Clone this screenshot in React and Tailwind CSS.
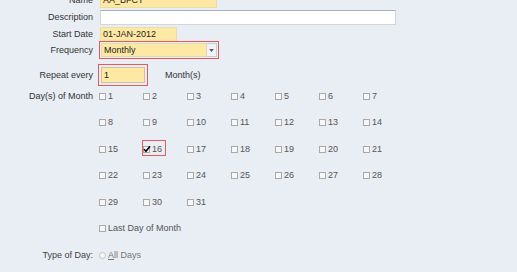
import React from "react";

const FONT = "font-['Liberation_Sans',Arial,sans-serif]";

function Label({ children, className = "" }) {
  return (
    <div className={`w-[93px] shrink-0 text-right text-[9px] leading-none text-[#333] pr-0 ${className}`}>
      {children}
    </div>
  );
}

function Box({ checked }) {
  return (
    <span className="relative inline-block w-[7px] h-[7px] border border-[#a9a9a9] bg-[#f7f7f7] shrink-0">
      {checked && (
        <svg viewBox="0 0 8 8" className="absolute left-[-1px] top-[-2px] w-[8px] h-[8px]">
          <path d="M1 4.2 L3 6.3 L7 1.2" fill="none" stroke="#000" strokeWidth="1.5" />
        </svg>
      )}
    </span>
  );
}

function Day({ n, checked }) {
  return (
    <div className="relative flex items-center h-[14px] gap-[2px] text-[9px] leading-none text-[#555]">
      {checked && (
        <span className="absolute left-[-1px] top-[-2px] w-[24px] h-[16px] border border-[#e35a5a]"></span>
      )}
      <Box checked={checked} />
      <span>{n}</span>
    </div>
  );
}

export default function App() {
  const days = Array.from({ length: 31 }, (_, i) => i + 1);
  return (
    <div className={`${FONT} w-[517px] h-[272px] overflow-hidden bg-[#e9edf4]`}>
      <div className="-mt-[7px] flex flex-col">
        {/* Name */}
        <div className="flex items-center h-[15px] gap-[7px]">
          <Label>Name</Label>
          <div className="w-[117px] h-[15px] bg-[#fee9a4] border border-[#efdca0] text-[9px] leading-none text-[#222] flex items-center pl-[2px]">
            AA_BFCT
          </div>
        </div>
        {/* Description */}
        <div className="flex items-center h-[15px] gap-[7px] mt-[2px]">
          <Label>Description</Label>
          <div className="w-[296px] h-[15px] bg-white border border-[#d0d6dd] border-t-[#aab1b9]"></div>
        </div>
        {/* Start Date */}
        <div className="flex items-center h-[15px] gap-[7px] mt-[2px]">
          <Label>Start Date</Label>
          <div className="w-[77px] h-[15px] bg-[#fee9a4] border border-[#efdca0] text-[9px] leading-none text-[#222] flex items-center pl-[2px]">
            01-JAN-2012
          </div>
        </div>
        {/* Frequency */}
        <div className="flex items-center h-[18px] gap-[6px] -mt-[1px]">
          <Label>Frequency</Label>
          <div className="w-[120px] h-[18px] border border-[#e35a5a] p-[1px] flex">
            <div className="flex-1 bg-[#fee9a4] border border-[#e6d9b0] text-[9px] leading-none text-[#222] flex items-center pl-[2px]">
              Monthly
            </div>
            <div className="w-[10px] bg-[#eef1f6] border border-[#c8ced6] border-l-0 flex items-center justify-center">
              <svg viewBox="0 0 6 4" className="w-[5px] h-[3px]">
                <path d="M0 0 H6 L3 4 Z" fill="#555" />
              </svg>
            </div>
          </div>
        </div>
        {/* Repeat every */}
        <div className="flex items-center h-[22px] gap-[5px] mt-[5px]">
          <Label>Repeat every</Label>
          <div className="w-[50px] h-[22px] border border-[#e35a5a] p-[2px]">
            <div className="w-full h-full bg-[#fee9a4] border border-[#c9c3aa] text-[9px] leading-none text-[#222] flex items-center pl-[2px]">
              1
            </div>
          </div>
          <span className="ml-[12px] text-[9px] leading-none text-[#333]">Month(s)</span>
        </div>
        {/* Days of month */}
        <div className="flex gap-[6px] mt-[3px]">
          <Label className="h-[14px] flex items-center justify-end">Day(s) of Month</Label>
          <div className="grid grid-cols-[repeat(7,44px)] gap-y-[12.5px]">
            {days.map((d) => (
              <Day key={d} n={d} checked={d === 16} />
            ))}
          </div>
        </div>
        {/* Last Day */}
        <div className="flex gap-[6px] mt-[12px]">
          <div className="w-[93px] shrink-0"></div>
          <Day n="Last Day of Month" />
        </div>
        {/* Type of Day */}
        <div className="flex items-center gap-[6px] mt-[13px] h-[14px]">
          <Label className="text-[#444]">Type of Day:</Label>
          <div className="flex items-center gap-[2px] text-[9px] leading-none text-[#777]">
            <span className="inline-block w-[7px] h-[7px] rounded-full border border-[#c2c2c2] bg-[#f7f7f7]"></span>
            <span><span className="underline">A</span>ll Days</span>
          </div>
        </div>
      </div>
    </div>
  );
}
